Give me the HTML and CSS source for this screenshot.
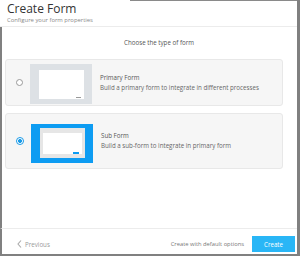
FILE: index.html
```html
<!DOCTYPE html>
<html>
<head>
<meta charset="utf-8">
<link rel="stylesheet" href="styles.css">
</head>
<body>
<div class="dialog">
  <header class="head">
    <h1 class="title">Create Form</h1>
    <p class="subtitle">Configure your form properties</p>
  </header>
  <main class="content">
    <p class="prompt">Choose the type of form</p>
    <div class="option">
      <span class="radio"></span>
      <div class="thumb">
        <div class="sheet"><span class="dash"></span></div>
      </div>
      <div class="info">
        <div class="name">Primary Form</div>
        <div class="desc">Build a primary form to integrate in different processes</div>
      </div>
    </div>
    <div class="option">
      <span class="radio checked"></span>
      <div class="thumb active">
        <div class="frame"><div class="sheet"><span class="dash"></span></div></div>
      </div>
      <div class="info">
        <div class="name">Sub Form</div>
        <div class="desc">Build a sub-form to integrate in primary form</div>
      </div>
    </div>
  </main>
  <footer class="foot">
    <a class="prev"><svg width="5" height="8" viewBox="0 0 5 8"><path d="M4 0.5 L1 4 L4 7.5" fill="none" stroke="#aaa" stroke-width="1.1"/></svg>Previous</a>
    <span class="spacer"></span>
    <a class="defaults">Create with default options</a>
    <button class="create">Create</button>
  </footer>
</div>
</body>
</html>
```
FILE: styles.css
```css
html, body {
  margin: 0;
  padding: 0;
  background: #fff;
}
body {
  width: 300px;
  height: 256px;
  overflow: hidden;
  font-family: "Open Sans", "Liberation Sans", sans-serif;
}
.dialog {
  position: relative;
  width: 297px;
  height: 254px;
  border-right: 3px solid #808080;
  border-bottom: 2px solid #808080;
  display: flex;
  flex-direction: column;
}
.dialog::before {
  content: "";
  position: absolute;
  top: 0;
  left: 130px;
  right: 0;
  height: 1px;
  background: #8a8a8a;
}
.head {
  height: 27px;
  padding: 2px 7px 0;
  box-sizing: border-box;
  border-bottom: 1px solid #ececec;
  flex: none;
}
.title {
  margin: 0;
  font-size: 12px;
  font-weight: 400;
  line-height: 14px;
  color: #333;
}
.subtitle {
  margin: 1px 0 0;
  font-size: 5.9px;
  line-height: 7px;
  color: #8a8a8a;
}
.content {
  height: 202px;
  box-sizing: border-box;
  flex: none;
  border-left: 2px solid #808080;
  padding: 0 14px 0 3px;
  display: flex;
  flex-direction: column;
  gap: 7px;
  border-bottom: 1px solid #ececec;
}
.prompt {
  margin: 12px 0 5px;
  padding-left: 30px;
  text-align: center;
  font-size: 6.2px;
  line-height: 8px;
  color: #555;
}
.option {
  display: flex;
  align-items: center;
  background: #f6f6f6;
  border: 1px solid #e8e8e8;
  border-radius: 3px;
  height: 45px;
  padding: 0 0 0 10px;
  flex: none;
}
.option + .option {
  height: 54px;
}
.radio {
  width: 5px;
  height: 5px;
  border: 1px solid #999;
  border-radius: 50%;
  background: #fff;
  margin-right: 7px;
  flex: none;
}
.radio.checked {
  width: 6px;
  height: 6px;
  border-color: #1a9be8;
  background: radial-gradient(circle, #1a9be8 0 1.8px, #fff 2.2px);
}
.thumb {
  width: 62px;
  height: 40px;
  background: #dde1e5;
  display: flex;
  align-items: center;
  justify-content: center;
  flex: none;
  margin-top: 2px;
}
.thumb .sheet {
  position: relative;
  width: 45px;
  height: 29px;
  background: #fff;
  margin-top: 2px;
}
.thumb .dash {
  position: absolute;
  right: 3px;
  bottom: 1px;
  width: 5px;
  height: 1px;
  background: #999;
}
.thumb.active {
  background: #0d9cf2;
  height: 39px;
  margin-top: 4px;
}
.frame {
  width: 45px;
  height: 30px;
  background: #e6e6e6;
  display: flex;
  align-items: center;
  justify-content: center;
}
.thumb.active .sheet {
  width: 39px;
  height: 21px;
  margin-top: 0;
}
.thumb.active .dash {
  background: #0d9cf2;
  width: 6px;
  height: 2px;
  right: 3px;
  bottom: 0;
}
.info {
  margin-left: 8px;
  font-size: 6.2px;
  line-height: 10px;
  color: #666;
}
.name {
  color: #555;
}
.foot {
  height: 25px;
  flex: none;
  display: flex;
  align-items: center;
  padding: 5px 2px 0 15px;
  border-left: 2px solid #808080;
  box-sizing: border-box;
}
.prev {
  display: flex;
  align-items: center;
  gap: 3px;
  font-size: 6.2px;
  color: #999;
}
.spacer {
  flex: 1;
}
.defaults {
  font-size: 5.8px;
  color: #777;
  margin-right: 8px;
}
.create {
  width: 43px;
  height: 16px;
  border: none;
  background: #29b6f6;
  color: #fff;
  font-family: inherit;
  font-size: 6.2px;
  padding: 0;
}
```
